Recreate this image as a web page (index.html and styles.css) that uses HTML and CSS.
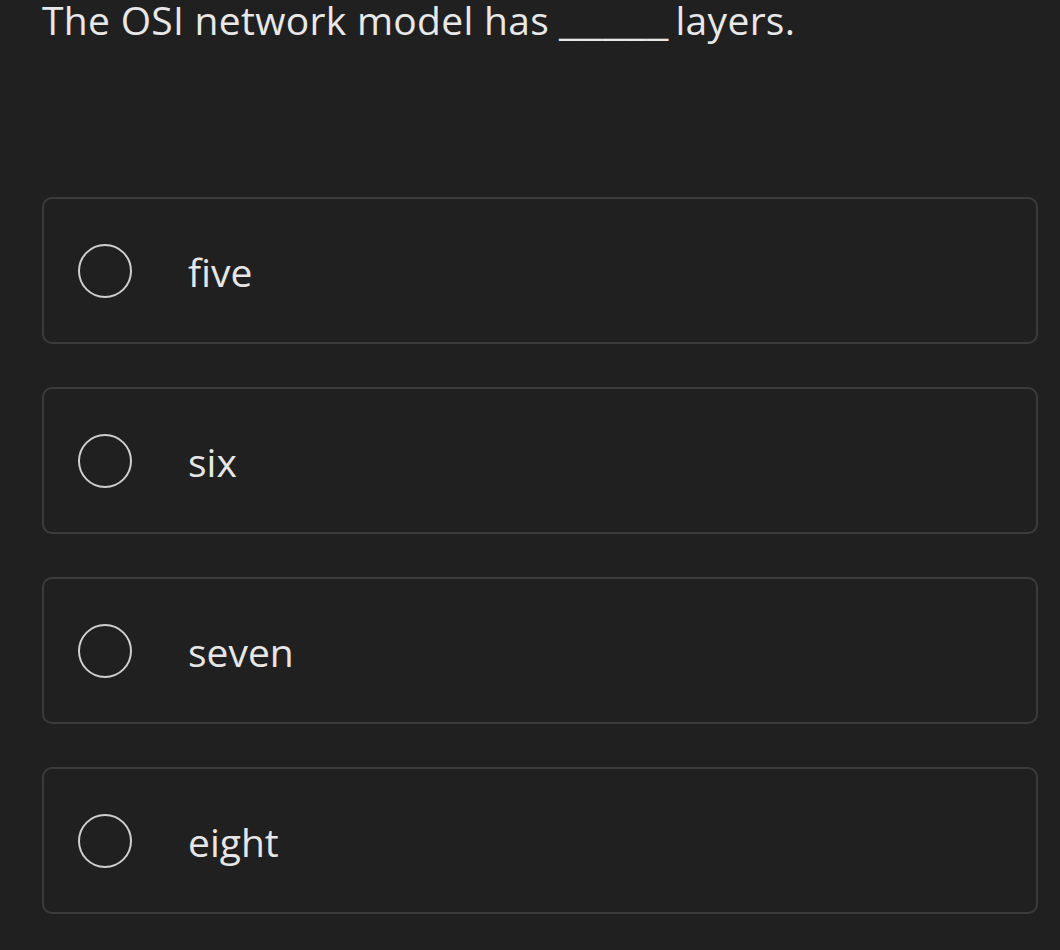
FILE: index.html
```html
<!DOCTYPE html>
<html lang="en">
<head>
<meta charset="utf-8">
<title>Quiz</title>
<link rel="stylesheet" href="styles.css">
</head>
<body>
<main class="quiz">
  <h1 class="question">The OSI network model has <span class="blank">_____</span> layers.</h1>
  <ul class="options">
    <li class="option"><span class="radio"></span><span class="label">five</span></li>
    <li class="option"><span class="radio"></span><span class="label">six</span></li>
    <li class="option"><span class="radio"></span><span class="label">seven</span></li>
    <li class="option"><span class="radio"></span><span class="label">eight</span></li>
  </ul>
</main>
</body>
</html>
```
FILE: styles.css
```css
html, body {
  margin: 0;
  padding: 0;
  background: #202020;
}
body {
  font-family: "Open Sans", "Lato", sans-serif;
  color: #e6e6e6;
}
.quiz {
  padding: 0 22px 0 42px;
}
.question {
  margin: 0;
  font-size: 39px;
  font-weight: 400;
  line-height: 40px;
  letter-spacing: 0.3px;
  color: #e8e8e8;
}
.blank {
  display: inline-block;
  width: 106px;
  letter-spacing: 0;
  transform: scaleX(1.28);
  transform-origin: left center;
  margin-left: -0.5px;
}
.options {
  list-style: none;
  margin: 157px 0 0 0;
  padding: 0;
  display: flex;
  flex-direction: column;
  gap: 43px;
}
.option {
  box-sizing: border-box;
  height: 147px;
  border: 2px solid #3b3b3b;
  border-radius: 10px;
  display: flex;
  align-items: center;
  padding-left: 34px;
}
.radio {
  box-sizing: border-box;
  width: 54px;
  height: 54px;
  border: 2.5px solid #cfcfcf;
  border-radius: 50%;
  flex: none;
}
.label {
  margin-left: 56px;
  font-size: 39px;
  line-height: 44px;
  padding-top: 3px;
  color: #e6e6e6;
}
```
